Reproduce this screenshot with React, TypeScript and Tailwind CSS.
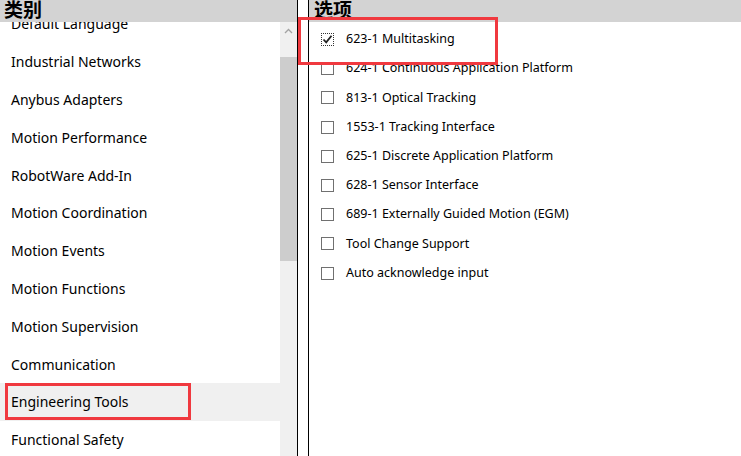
import React from "react";

const CATEGORIES = [
  "Default Language",
  "Industrial Networks",
  "Anybus Adapters",
  "Motion Performance",
  "RobotWare Add-In",
  "Motion Coordination",
  "Motion Events",
  "Motion Functions",
  "Motion Supervision",
  "Communication",
  "Engineering Tools",
  "Functional Safety",
];

const OPTIONS = [
  { label: "623-1 Multitasking", checked: true },
  { label: "624-1 Continuous Application Platform", checked: false },
  { label: "813-1 Optical Tracking", checked: false },
  { label: "1553-1 Tracking Interface", checked: false },
  { label: "625-1 Discrete Application Platform", checked: false },
  { label: "628-1 Sensor Interface", checked: false },
  { label: "689-1 Externally Guided Motion (EGM)", checked: false },
  { label: "Tool Change Support", checked: false },
  { label: "Auto acknowledge input", checked: false },
];

const FONT = { fontFamily: '"Noto Sans", "Open Sans", sans-serif' };

function CheckBox({ checked }: { checked: boolean }) {
  if (!checked) {
    return <span className="w-[13px] h-[13px] border border-[#707070] bg-white shrink-0" />;
  }
  return (
    <span className="w-[13px] h-[13px] border border-dotted border-[#333] bg-white shrink-0 flex items-center justify-center">
      <svg width="11" height="11" viewBox="0 0 11 11">
        <path d="M1.5 5.5 L4.2 8.3 L9.5 1.8" fill="none" stroke="#222" strokeWidth="1.8" />
      </svg>
    </span>
  );
}

export default function App() {
  return (
    <div className="w-[741px] h-[456px] overflow-hidden bg-white flex text-black" style={FONT}>
      {/* Categories */}
      <div className="w-[298px] h-full border-r border-black flex flex-col relative">
        <div className="h-[22px] bg-[#d3d3d3] shrink-0 relative z-10 overflow-hidden">
          <span
            className="block pl-[4px] -mt-[4px] text-[19px] font-bold leading-[26px]"
            style={{ fontFamily: '"Noto Sans CJK SC", sans-serif' }}
          >
            类别
          </span>
        </div>
        <div className="flex-1 flex min-h-0">
          <div className="flex-1 overflow-hidden">
            <div className="-mt-[17px]">
              {CATEGORIES.map((c) => {
                const selected = c === "Engineering Tools";
                return (
                  <div
                    key={c}
                    className={`h-[37.8px] flex items-center pl-[11px] text-[14px] ${selected ? "bg-[#f0f0f0]" : ""}`}
                  >
                    {c}
                  </div>
                );
              })}
            </div>
          </div>
          {/* scrollbar */}
          <div className="w-[17px] bg-[#f0f0f0] flex flex-col">
            <div className="h-[35px] flex justify-center pt-[6px]">
              <svg width="9" height="6" viewBox="0 0 9 6">
                <path d="M1 5 L4.5 1.5 L8 5" fill="none" stroke="#a3a3a3" strokeWidth="1.3" />
              </svg>
            </div>
            <div className="h-[204px] bg-[#cdcdcd]" />
          </div>
        </div>
        <div className="absolute left-[5px] top-[383px] w-[186px] h-[37px] border-[3px] border-[#f0393f]" />
      </div>

      {/* gap */}
      <div className="w-[11px] h-full border-r border-black" />

      {/* Options */}
      <div className="flex-1 h-full flex flex-col relative">
        <div className="h-[22px] bg-[#d3d3d3] shrink-0 overflow-hidden">
          <span
            className="block pl-[5px] -mt-[4px] text-[19px] font-bold leading-[26px]"
            style={{ fontFamily: '"Noto Sans CJK SC", sans-serif' }}
          >
            选项
          </span>
        </div>
        <div className="pt-[3px]">
          {OPTIONS.map((o) => (
            <div key={o.label} className="h-[29.2px] flex items-center pl-[12px] gap-[12px] text-[12.5px]">
              <CheckBox checked={o.checked} />
              <span>{o.label}</span>
            </div>
          ))}
        </div>
        <div className="absolute -left-[11px] top-[17px] w-[200px] h-[48px] border-[3px] border-[#f0393f]" />
      </div>
    </div>
  );
}
